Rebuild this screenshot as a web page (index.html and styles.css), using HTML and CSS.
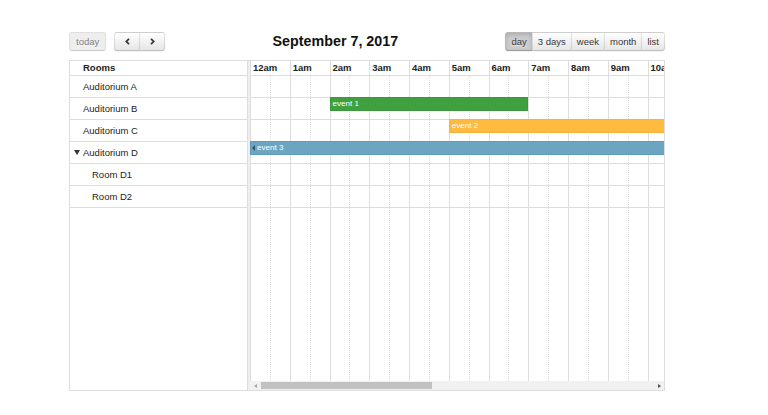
FILE: index.html
```html
<!DOCTYPE html>
<html lang="en">
<head>
<meta charset="utf-8">
<title>Timeline</title>
<link rel="stylesheet" href="styles.css">
</head>
<body>
<div class="page">
  <div class="cal">
    <div class="toolbar">
      <div class="tb-left">
        <button class="btn disabled">today</button>
        <div class="btn-group">
          <button class="btn icon" aria-label="prev"><svg width="5" height="7" viewBox="0 0 5 7"><polyline points="4,0.8 1.3,3.5 4,6.2" fill="none" stroke="#333" stroke-width="1.7"/></svg></button>
          <button class="btn icon" aria-label="next"><svg width="5" height="7" viewBox="0 0 5 7"><polyline points="1,0.8 3.7,3.5 1,6.2" fill="none" stroke="#333" stroke-width="1.7"/></svg></button>
        </div>
      </div>
      <div class="tb-center"><h2>September 7, 2017</h2></div>
      <div class="btn-group">
        <button class="btn active">day</button>
        <button class="btn">3 days</button>
        <button class="btn">week</button>
        <button class="btn">month</button>
        <button class="btn">list</button>
      </div>
    </div>

    <div class="view">
      <div class="res-pane">
        <div class="res-head">Rooms</div>
        <div class="res-row"><span class="exp"></span>Auditorium A</div>
        <div class="res-row"><span class="exp"></span>Auditorium B</div>
        <div class="res-row"><span class="exp"></span>Auditorium C</div>
        <div class="res-row"><span class="exp"><svg width="6" height="5" viewBox="0 0 6 5"><polygon points="0,0 6,0 3,5" fill="#333"/></svg></span>Auditorium D</div>
        <div class="res-row"><span class="exp"></span><span class="exp"></span>Room D1</div>
        <div class="res-row"><span class="exp"></span><span class="exp"></span>Room D2</div>
      </div>
      <div class="divider"></div>
      <div class="time-pane">
        <div class="time-clip">
          <div class="time-inner">
            <div class="time-head">
              <div class="hcell">12am</div><div class="hcell">1am</div><div class="hcell">2am</div><div class="hcell">3am</div>
              <div class="hcell">4am</div><div class="hcell">5am</div><div class="hcell">6am</div><div class="hcell">7am</div>
              <div class="hcell">8am</div><div class="hcell">9am</div><div class="hcell">10am</div><div class="hcell">11am</div>
              <div class="hcell">12pm</div><div class="hcell">1pm</div><div class="hcell">2pm</div><div class="hcell">3pm</div>
              <div class="hcell">4pm</div><div class="hcell">5pm</div><div class="hcell">6pm</div><div class="hcell">7pm</div>
              <div class="hcell">8pm</div><div class="hcell">9pm</div><div class="hcell">10pm</div><div class="hcell">11pm</div>
            </div>
            <div class="time-body">
              <div class="slats">
                <div class="slat"><span></span><span></span></div><div class="slat"><span></span><span></span></div>
                <div class="slat"><span></span><span></span></div><div class="slat"><span></span><span></span></div>
                <div class="slat"><span></span><span></span></div><div class="slat"><span></span><span></span></div>
                <div class="slat"><span></span><span></span></div><div class="slat"><span></span><span></span></div>
                <div class="slat"><span></span><span></span></div><div class="slat"><span></span><span></span></div>
                <div class="slat"><span></span><span></span></div><div class="slat"><span></span><span></span></div>
                <div class="slat"><span></span><span></span></div><div class="slat"><span></span><span></span></div>
                <div class="slat"><span></span><span></span></div><div class="slat"><span></span><span></span></div>
                <div class="slat"><span></span><span></span></div><div class="slat"><span></span><span></span></div>
                <div class="slat"><span></span><span></span></div><div class="slat"><span></span><span></span></div>
                <div class="slat"><span></span><span></span></div><div class="slat"><span></span><span></span></div>
                <div class="slat"><span></span><span></span></div><div class="slat"><span></span><span></span></div>
              </div>
              <div class="lanes">
                <div class="lane"></div>
                <div class="lane"><div class="event ev-green ev-1">event 1</div></div>
                <div class="lane"><div class="event ev-orange ev-2">event 2</div></div>
                <div class="lane"><div class="event ev-blue ev-3 not-start">event 3</div></div>
                <div class="lane"></div>
                <div class="lane"></div>
              </div>
            </div>
          </div>
        </div>
        <div class="hscroll">
          <span class="arr arr-left"></span>
          <div class="track"><div class="thumb"></div></div>
          <span class="arr arr-right"></span>
        </div>
      </div>
    </div>
  </div>
</div>
</body>
</html>
```
FILE: styles.css
```css
* { box-sizing: border-box; }
html, body { margin: 0; padding: 0; background: #fff; }
body {
  font-family: "Liberation Sans", Arial, sans-serif;
  font-size: 9.5px;
  color: #222;
}
.page { padding: 32px 0 0 69px; }
.cal { width: 596px; }

/* toolbar */
.toolbar { display: flex; align-items: center; height: 19px; margin-bottom: 9px; }
.tb-left { display: flex; gap: 8px; }
.tb-center { flex: 1; text-align: center; }
.tb-center h2 { margin: 0; font-size: 14.3px; font-weight: bold; color: #111; line-height: 19px; }
.btn-group { display: flex; }
.btn {
  height: 19px;
  margin: 0;
  padding: 0 5px;
  font-family: inherit;
  font-size: 9.5px;
  color: #333;
  background-color: #f5f5f5;
  background-image: linear-gradient(to bottom, #fff, #e6e6e6);
  border: 1px solid;
  border-color: rgba(0,0,0,.1) rgba(0,0,0,.1) rgba(0,0,0,.25);
  border-radius: 0;
  box-shadow: inset 0 1px 0 rgba(255,255,255,.2), 0 1px 2px rgba(0,0,0,.05);
  text-shadow: 0 1px 1px rgba(255,255,255,.75);
  display: flex; align-items: center; justify-content: center;
}
.btn-group .btn + .btn { margin-left: -1px; }
.btn-group .btn:first-child { border-radius: 3px 0 0 3px; }
.btn-group .btn:last-child { border-radius: 0 3px 3px 0; }
.tb-left > .btn { border-radius: 3px; padding: 0 6px; }
.btn.icon { width: 26px; padding: 0; }
.btn.disabled {
  background-image: none;
  background-color: #e6e6e6;
  opacity: .65;
  box-shadow: none;
}
.btn.active {
  background-color: #ccc;
  background-image: none;
  box-shadow: inset 0 2px 4px rgba(0,0,0,.15), 0 1px 2px rgba(0,0,0,.05);
}

/* view */
.view { display: flex; border: 1px solid #ddd; height: 331px; }
.res-pane { width: 178px; border-right: 1px solid #ddd; display: flex; flex-direction: column; }
.res-head {
  height: 15px; border-bottom: 1px solid #ddd;
  padding-left: 13px; font-weight: bold; line-height: 14px;
}
.res-row {
  height: 22px; border-bottom: 1px solid #ddd;
  padding-left: 4px; display: flex; align-items: center;
}
.exp { width: 9px; flex: none; display: flex; align-items: center; }
.exp svg { display: block; }
.divider { width: 2px; background: #eee; }
.time-pane { width: 414px; display: flex; flex-direction: column; }
.time-clip { flex: 1; overflow: hidden; display: flex; }
.time-inner { width: 954px; flex: none; display: flex; flex-direction: column; }
.time-head { display: flex; height: 15px; border-bottom: 1px solid #ddd; }
.hcell {
  width: 39.75px; flex: none; border-left: 1px solid #ddd;
  padding-left: 2px; font-weight: bold; line-height: 14px; white-space: nowrap; overflow: hidden;
}
.time-body { flex: 1; display: grid; grid-template: 1fr / 1fr; }
.slats { grid-area: 1 / 1; display: flex; }
.slat { width: 39.75px; flex: none; border-left: 1px solid #ddd; display: flex; }
.slat span { flex: 1; }
.slat span + span { border-left: 1px dotted #ddd; }
.lanes { grid-area: 1 / 1; display: flex; flex-direction: column; }
.lane {
  height: 22px; border-bottom: 1px solid #ddd;
  display: grid; grid-template-columns: repeat(24, 39.75px); align-items: start;
}
.event {
  height: 14px; margin-top: -1px;
  border: 1px solid; color: #fff;
  font-size: 8.1px; line-height: 12px; padding-left: 2px;
  white-space: nowrap; overflow: hidden;
  display: flex; align-items: center;
}
.ev-1 { grid-column: 3 / 8; }
.ev-2 { grid-column: 6 / 25; }
.ev-3 { grid-column: 1 / 25; padding-left: 0; }
.ev-green { background: #40a040; border-color: #3a9a3a; }
.ev-orange { background: #ffbb40; border-color: #f8b43a; }
.ev-blue { background: #6ba5c2; border-color: #5f9cbb; }
.not-start::before {
  content: "";
  border-top: 3.5px solid transparent;
  border-bottom: 3.5px solid transparent;
  border-right: 3.5px solid rgba(0,0,0,.5);
  margin: 0 2px 0 1px;
}

/* horizontal scrollbar */
.hscroll { height: 9px; background: #f1f1f1; display: flex; align-items: center; }
.arr { width: 10px; flex: none; display: flex; justify-content: center; }
.arr-left::before {
  content: ""; border-top: 2.5px solid transparent; border-bottom: 2.5px solid transparent;
  border-right: 3px solid #a3a3a3;
}
.arr-right::before {
  content: ""; border-top: 2.5px solid transparent; border-bottom: 2.5px solid transparent;
  border-left: 3px solid #505050;
}
.track { flex: 1; display: flex; align-items: center; }
.thumb { width: 171px; height: 7px; margin-left: 1px; background: #c1c1c1; }
```
